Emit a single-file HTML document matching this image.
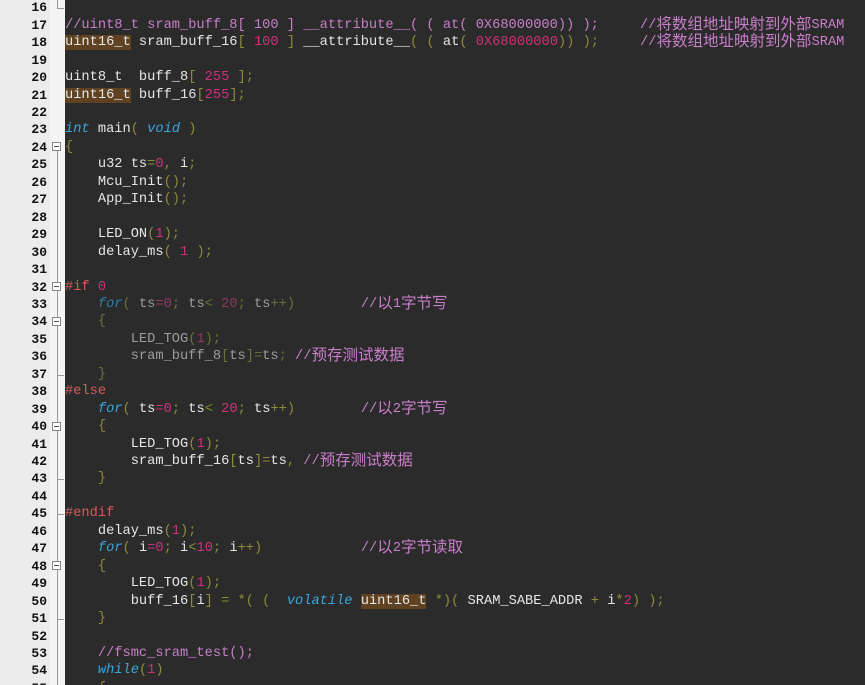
<!DOCTYPE html>
<html style="overflow:hidden;background:#2b2b2b"><head><meta charset="utf-8"><style>
html,body{margin:0;width:865px;height:685px;overflow:hidden}
body{background:#2b2b2b;position:relative;font-family:"Liberation Mono","Noto Sans CJK SC",monospace}
#g{position:absolute;left:0;top:0;width:50px;height:685px;background:#ececec}
#f{position:absolute;left:50px;top:0;width:15px;height:685px;background:#f4f4f4}
.n{position:absolute;left:0;width:47px;text-align:right;font:bold 13px "Liberation Mono",monospace;color:#111;height:17.45px;line-height:17.45px}
.r{position:absolute;left:65px;white-space:pre;font-size:13.7px;height:17.45px;line-height:17.45px;color:#e6e6e6;overflow:visible}
.p{color:#8c8c3a}.d{color:#d0307a}.k{color:#3ba6d8;font-style:italic}.c{color:#c97ec9}.pp{color:#d85a5a}.h{background:#5e4222}.g{color:#9c9c9c}.gp{color:#6e6e3a}.gd{color:#8e3a5e}.gk{color:#2f7ea6;font-style:italic}
.z{font-family:"Noto Sans CJK SC",sans-serif;font-size:15.5px;line-height:0;position:relative;top:1px}
.vl{position:absolute;left:57px;width:1px;background:#999}
.tk{position:absolute;left:57px;width:7px;height:1px;background:#999}
.bx{position:absolute;left:52px;width:9px;height:9px;border:1px solid #888;background:#fff;box-sizing:border-box}
.bx:after{content:"";position:absolute;left:1px;top:3px;width:5px;height:1px;background:#555}
</style></head><body>
<div id="g"></div><div id="f"></div>
<div class="vl" style="top:0;height:8px"></div><div class="tk" style="top:8px"></div>
<div class="vl" style="top:150px;height:535px"></div>
<div class="tk" style="top:375px"></div><div class="tk" style="top:479px"></div><div class="tk" style="top:514px"></div><div class="tk" style="top:619px"></div>
<div class="bx" style="top:142px"></div><div class="bx" style="top:282px"></div><div class="bx" style="top:317px"></div><div class="bx" style="top:422px"></div><div class="bx" style="top:561px"></div>
<script>
var L=[
'',
'<span class="c">//uint8_t sram_buff_8[ 100 ] __attribute__( ( at( 0X68000000)) );     //<span class="z">将数组地址映射到外部</span>SRAM</span>',
'<span class="h">uint16_t</span> sram_buff_16<span class="p">[</span> <span class="d">100</span> <span class="p">]</span> __attribute__<span class="p">( (</span> at<span class="p">(</span> <span class="d">0X68000000</span><span class="p">)) );</span>     <span class="c">//<span class="z">将数组地址映射到外部</span>SRAM</span>',
'',
'uint8_t  buff_8<span class="p">[</span> <span class="d">255</span> <span class="p">];</span>',
'<span class="h">uint16_t</span> buff_16<span class="p">[</span><span class="d">255</span><span class="p">];</span>',
'',
'<span class="k">int</span> main<span class="p">(</span> <span class="k">void</span> <span class="p">)</span>',
'<span class="p">{</span>',
'    u32 ts<span class="p">=</span><span class="d">0</span><span class="p">,</span> i<span class="p">;</span>',
'    Mcu_Init<span class="p">();</span>',
'    App_Init<span class="p">();</span>',
'',
'    LED_ON<span class="p">(</span><span class="d">1</span><span class="p">);</span>',
'    delay_ms<span class="p">(</span> <span class="d">1</span> <span class="p">);</span>',
'',
'<span class="pp">#if</span> <span class="d">0</span>',
'<span class="g">    <span class="gk">for</span><span class="gp">(</span> ts<span class="gd">=0</span><span class="gp">;</span> ts<span class="gp">&lt;</span> <span class="gd">20</span><span class="gp">;</span> ts<span class="gp">++)</span>        <span class="c">//<span class="z">以</span>1<span class="z">字节写</span></span></span>',
'<span class="gp">    {</span>',
'<span class="g">        LED_TOG<span class="gp">(</span><span class="gd">1</span><span class="gp">);</span></span>',
'<span class="g">        sram_buff_8<span class="gp">[</span>ts<span class="gp">]=</span>ts<span class="gp">;</span> <span class="c">//<span class="z">预存测试数据</span></span></span>',
'<span class="gp">    }</span>',
'<span class="pp">#else</span>',
'    <span class="k">for</span><span class="p">(</span> ts<span class="d">=0</span><span class="p">;</span> ts<span class="p">&lt;</span> <span class="d">20</span><span class="p">;</span> ts<span class="p">++)</span>        <span class="c">//<span class="z">以</span>2<span class="z">字节写</span></span>',
'<span class="p">    {</span>',
'        LED_TOG<span class="p">(</span><span class="d">1</span><span class="p">);</span>',
'        sram_buff_16<span class="p">[</span>ts<span class="p">]=</span>ts<span class="p">,</span> <span class="c">//<span class="z">预存测试数据</span></span>',
'<span class="p">    }</span>',
'',
'<span class="pp">#endif</span>',
'    delay_ms<span class="p">(</span><span class="d">1</span><span class="p">);</span>',
'    <span class="k">for</span><span class="p">(</span> i<span class="d">=0</span><span class="p">;</span> i<span class="p">&lt;</span><span class="d">10</span><span class="p">;</span> i<span class="p">++)</span>            <span class="c">//<span class="z">以</span>2<span class="z">字节读取</span></span>',
'<span class="p">    {</span>',
'        LED_TOG<span class="p">(</span><span class="d">1</span><span class="p">);</span>',
'        buff_16<span class="p">[</span>i<span class="p">] = *( (</span>  <span class="k">volatile</span> <span class="h">uint16_t</span> <span class="p">*)(</span> SRAM_SABE_ADDR <span class="p">+</span> i<span class="p">*</span><span class="d">2</span><span class="p">) );</span>',
'<span class="p">    }</span>',
'',
'    <span class="c">//fsmc_sram_test();</span>',
'    <span class="k">while</span><span class="p">(</span><span class="d">1</span><span class="p">)</span>',
'<span class="p">    {</span>'
];
var h='';
for(var i=0;i<L.length;i++){var t=(-0.7+i*17.45).toFixed(2);h+='<div class="n" style="top:'+t+'px">'+(16+i)+'</div><div class="r" style="top:'+t+'px">'+L[i]+'</div>';}
document.body.insertAdjacentHTML('beforeend',h);
</script>
</body></html>
